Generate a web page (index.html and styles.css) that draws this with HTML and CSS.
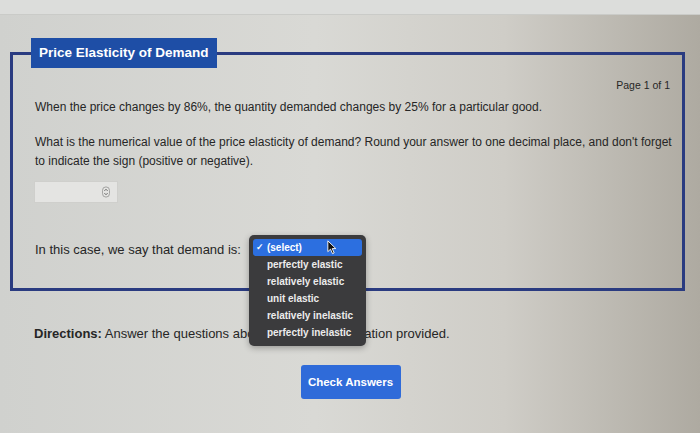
FILE: index.html
```html
<!DOCTYPE html>
<html lang="en">
<head>
  <meta charset="UTF-8">
  <title>Price Elasticity of Demand</title>
  <link rel="stylesheet" href="styles.css">
</head>
<body>
  <div class="topbar"></div>

  <main class="page">
    <fieldset class="problem">
      <legend>Price Elasticity of Demand</legend>

      <div class="page-num">Page 1 of 1</div>

      <p>When the price changes by 86%, the quantity demanded changes by 25% for a particular good.</p>

      <p>What is the numerical value of the price elasticity of demand? Round your answer to one decimal place, and don't forget to indicate the sign (positive or negative).</p>

      <div class="answer-input">
        <svg class="stepper" viewBox="0 0 10 14">
          <rect x="0.6" y="0.6" width="8.8" height="12.8" rx="4.4" fill="none" stroke="#8a8a88" stroke-width="0.9"/>
          <path d="M3 5.6 L5 3.6 L7 5.6" fill="none" stroke="#555" stroke-width="1.1"/>
          <path d="M3 8.4 L5 10.4 L7 8.4" fill="none" stroke="#555" stroke-width="1.1"/>
        </svg>
      </div>

      <div class="demand-row">
        <span>In this case, we say that demand is:</span>
        <span class="select-wrap">
          <span class="select-box"></span>
          <!-- native popup, open -->
          <ul class="menu">
            <li class="selected"><span class="check">&#10003;</span>(select)</li>
            <li>perfectly elastic</li>
            <li>relatively elastic</li>
            <li>unit elastic</li>
            <li>relatively inelastic</li>
            <li>perfectly inelastic</li>
          </ul>
          <svg class="cursor" viewBox="0 0 12 18">
            <path d="M1 1 L1 14 L4.2 11 L6.6 16.4 L8.6 15.5 L6.3 10.3 L10.6 10.3 Z" fill="#111" stroke="#fff" stroke-width="1.1"/>
          </svg>
        </span>
      </div>
    </fieldset>

    <p class="directions"><b>Directions:</b> Answer the questions above using the information provided.</p>

    <div class="actions">
      <button class="btn-check">Check Answers</button>
    </div>
  </main>
</body>
</html>
```

FILE: styles.css
```css
:root {
  --frame-color: #2a3b80;
  --title-bg: #1e4ea6;
  --text-color: #262626;
  --btn-color: #2f6bd9;
  --menu-bg: #3b3b3d;
  --menu-hl: #2c6fe0;
}

body {
  margin: 0;
  min-height: 433px;
  font-family: "Liberation Sans", Arial, sans-serif;
  color: var(--text-color);
  background: linear-gradient(to right, #d0d1ce 0%, #d9d9d5 45%, #cfcdc7 72%, #aeaaa1 100%);
}

.topbar {
  height: 14px;
  background-color: #dcdddb;
  border-bottom: 1px solid #cacbc8;
}

.page {
  padding: 23px 15px 0 10px;
}

.problem {
  margin: 0;
  padding: 0 6px 28px 22px;
  border: 3px solid var(--frame-color);
}

.problem legend {
  margin-left: -4px;
  padding: 0 8px;
  line-height: 30px;
  font-size: 13.5px;
  font-weight: bold;
  color: #fff;
  background-color: var(--title-bg);
}

.page-num {
  margin-top: 10px;
  text-align: right;
  font-size: 10.5px;
  line-height: 14px;
  padding-right: 6px;
}

.problem p {
  margin: 6px 0 0;
  font-size: 12px;
  line-height: 19px;
}

.problem p + p {
  margin-top: 16px;
}

.answer-input {
  margin-top: 10px;
  width: 78px;
  height: 20px;
  display: flex;
  align-items: center;
  justify-content: flex-end;
  padding-right: 4px;
  background-color: #e4e4e2;
  border: 1px solid #cfcfcc;
  margin-left: -1px;
}

.stepper {
  width: 8px;
  height: 12px;
  margin-right: 3px;
}

.demand-row {
  margin-top: 36px;
  display: flex;
  align-items: center;
  gap: 11px;
  font-size: 13px;
  line-height: 20px;
}

.select-wrap {
  position: relative;
  display: inline-block;
}

.select-box {
  display: block;
  width: 110px;
  height: 17px;
  border: 2px solid #5b86dc;
  border-radius: 5px;
  background-color: #f2f2f0;
}

.menu {
  position: absolute;
  left: -3px;
  top: -4px;
  width: 109px;
  margin: 0;
  padding: 4px 4px 5px;
  list-style: none;
  background-color: var(--menu-bg);
  border-radius: 5px;
  box-shadow: 0 2px 6px rgba(0, 0, 0, 0.3);
  z-index: 2;
}

.menu li {
  padding-left: 14px;
  line-height: 17px;
  font-size: 10px;
  font-weight: bold;
  color: #ececec;
  white-space: nowrap;
  position: relative;
  border-radius: 3px;
}

.menu li.selected {
  background-color: var(--menu-hl);
  color: #fff;
}

.menu .check {
  position: absolute;
  left: 3px;
  font-size: 9px;
}

.cursor {
  position: absolute;
  left: 75px;
  top: 1px;
  width: 10px;
  height: 15px;
  z-index: 3;
}

.directions {
  margin: 33px 0 0 24px;
  font-size: 13px;
  line-height: 19px;
}

.actions {
  margin-top: 22px;
  display: flex;
  justify-content: center;
  padding-left: 6px;
}

.btn-check {
  width: 100px;
  height: 34px;
  padding: 0;
  border: none;
  border-radius: 3px;
  background-color: var(--btn-color);
  color: #fff;
  font-family: inherit;
  font-size: 11.5px;
  font-weight: bold;
  white-space: nowrap;
}
```
